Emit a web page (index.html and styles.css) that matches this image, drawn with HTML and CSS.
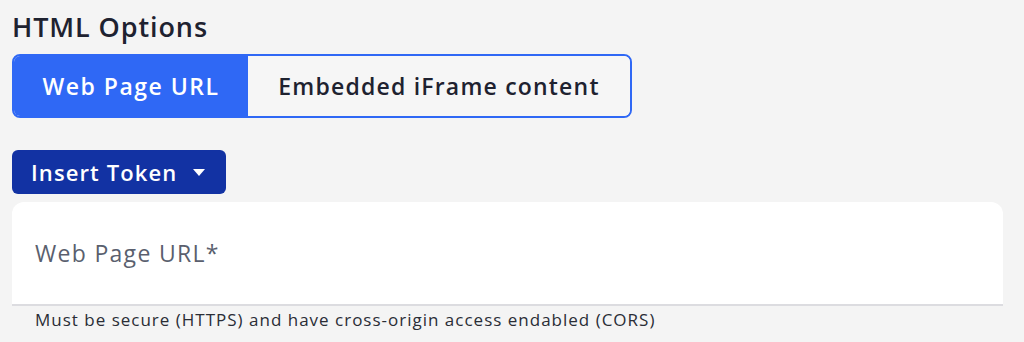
FILE: index.html
```html
<!DOCTYPE html>
<html lang="en">
<head>
    <meta charset="UTF-8">
    <meta name="viewport" content="width=device-width, initial-scale=1.0">
    <title>HTML Options</title>
    <link rel="stylesheet" href="styles.css">
</head>
<body>
    <div class="container">
        <h2 class="title">HTML Options</h2>

        <div class="toggle">
            <div class="toggle-item active">Web Page URL</div>
            <div class="toggle-item">Embedded iFrame content</div>
        </div>

        <button class="token-button">Insert Token <span class="caret"></span></button>

        <div class="field">
            <input type="text" class="field-input" placeholder="Web Page URL*">
        </div>
        <div class="hint">Must be secure (HTTPS) and have cross-origin access endabled (CORS)</div>
    </div>
</body>
</html>
```

FILE: styles.css
```css
body {
    margin: 0;
    background-color: #f4f4f4;
    font-family: "Open Sans", Lato, sans-serif;
    color: #1e2230;
}
.container {
    padding: 10px 21px 0 12px;
}
.title {
    margin: 0 0 10px 0;
    font-size: 27px;
    font-weight: 600;
    line-height: 34px;
    letter-spacing: 0.9px;
}
.toggle {
    display: flex;
    width: 616px;
    height: 60px;
    border: 2px solid #2f68f5;
    border-radius: 8px;
    overflow: hidden;
}
.toggle-item {
    display: flex;
    align-items: center;
    justify-content: center;
    font-size: 23px;
    font-weight: 600;
    letter-spacing: 1.2px;
    background-color: #f6f6f6;
    flex: 1;
}
.toggle-item.active {
    flex: 0 0 234px;
    background-color: #2f68f5;
    color: #fff;
    letter-spacing: 1.5px;
}
.token-button {
    display: flex;
    align-items: center;
    margin-top: 32px;
    height: 44px;
    padding: 0 21px 0 19px;
    background-color: #1232a3;
    color: #fff;
    border: none;
    border-radius: 6px;
    font-family: inherit;
    font-size: 22px;
    font-weight: 600;
    letter-spacing: 1.1px;
}
.caret {
    margin-left: 16px;
    width: 0;
    height: 0;
    border-left: 6px solid transparent;
    border-right: 6px solid transparent;
    border-top: 7px solid #fff;
}
.field {
    margin-top: 8px;
    background-color: #fff;
    border-radius: 12px 12px 0 0;
    border-bottom: 2px solid #dcdce0;
}
.field-input {
    display: block;
    width: 100%;
    height: 102px;
    box-sizing: border-box;
    padding: 0 23px;
    border: none;
    background: transparent;
    font-family: inherit;
    font-size: 23px;
    letter-spacing: 1.3px;
    outline: none;
}
.field-input::placeholder {
    color: #5a5f6e;
}
.hint {
    margin: 4px 0 0 23px;
    font-size: 17px;
    line-height: 20px;
    letter-spacing: 1px;
    color: #2a2d36;
}
```
